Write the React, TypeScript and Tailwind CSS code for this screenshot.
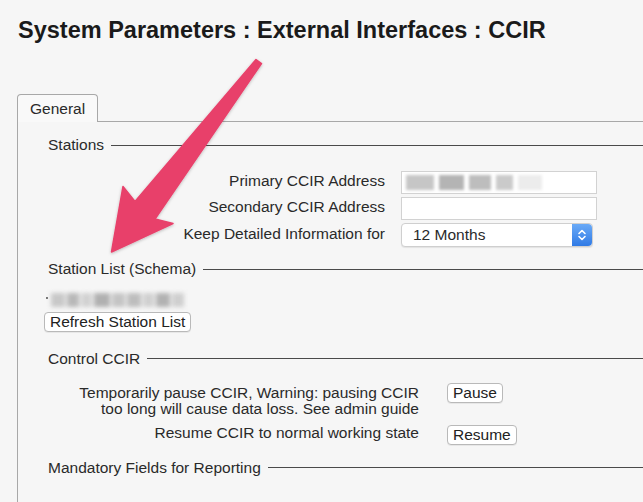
import React from 'react';

function SectionHeading({ title }: { title: string }) {
  return (
    <div className="flex h-[20px] items-center gap-[7px]">
      <span className="whitespace-nowrap">{title}</span>
      <div className="h-px flex-1 bg-[#4a4a4a]" />
    </div>
  );
}

function MacButton({ label, className = '' }: { label: string; className?: string }) {
  return (
    <button
      className={`h-[20px] whitespace-nowrap rounded-[4px] border border-[#b9b9b9] bg-white px-[5px] text-[15.5px] leading-[18px] text-[#222] shadow-[0_1px_0_rgba(0,0,0,0.06)] ${className}`}
    >
      {label}
    </button>
  );
}

function Stepper() {
  return (
    <div className="flex h-full w-[20px] items-center justify-center rounded-r-[4px] bg-gradient-to-b from-[#6aaaf7] to-[#2f7ae5]">
      <svg width="10" height="14" viewBox="0 0 10 14" fill="none">
        <path d="M2 5.5 L5 2.5 L8 5.5" stroke="white" strokeWidth="1.6" strokeLinecap="round" strokeLinejoin="round" />
        <path d="M2 8.5 L5 11.5 L8 8.5" stroke="white" strokeWidth="1.6" strokeLinecap="round" strokeLinejoin="round" />
      </svg>
    </div>
  );
}

// annotation arrow drawn over the page
function Arrow() {
  return (
    <svg className="pointer-events-none absolute inset-0" width="643" height="502" viewBox="0 0 643 502">
      <defs>
        <filter id="shadow" x="-20%" y="-20%" width="140%" height="140%">
          <feDropShadow dx="0" dy="1" stdDeviation="1.5" floodColor="#000" floodOpacity="0.25" />
        </filter>
      </defs>
      <polygon
        points="256,59.5 261.5,63.5 155,219 173,223.5 111.5,252 123,186.5 135,201.5"
        fill="#e8416b"
        stroke="#e8416b"
        strokeWidth="1.5"
        strokeLinejoin="round"
        filter="url(#shadow)"
      />
    </svg>
  );
}

export default function App() {
  return (
    <div className="relative h-[502px] w-[643px] overflow-hidden bg-[#f6f6f6] font-['Liberation_Sans',Arial,sans-serif] text-[15.5px] text-[#2a2a2a]">
      <h1 className="pl-[18px] pt-[16px] text-[23.5px] font-bold leading-[28px] text-[#1a1a1a]">
        System Parameters : External Interfaces : CCIR
      </h1>

      <div className="mt-[50px] flex items-end">
        <div className="ml-[17px] flex h-[28px] w-[81px] items-center rounded-t-[4px] border border-b-0 border-[#a8a8a8] bg-[#f9f9f9] pl-[12px] text-[15.5px]">
          General
        </div>
        <div className="flex-1 border-b border-[#a8a8a8]" />
      </div>

      <div className="ml-[17px] h-[400px] border-l border-[#a8a8a8] pl-[30px]">
        <div className="pt-[13px]">
          <SectionHeading title="Stations" />
        </div>

        <div className="mt-[16px] grid grid-cols-[337px_196px] gap-x-[16px] gap-y-[3px]">
          <div className="flex h-[23px] items-center justify-end pb-[4px]">Primary CCIR Address</div>
          <div className="relative h-[23px] overflow-hidden border border-[#d2d2d2] bg-white">
            <div className="absolute left-[4px] top-[2px] flex h-[17px] items-center gap-[5px] blur-[1.5px]">
              <div className="h-[15px] w-[28px] bg-[#c6c6c6]" />
              <div className="h-[15px] w-[25px] bg-[#b4b4b4]" />
              <div className="h-[15px] w-[22px] bg-[#bdbdbd]" />
              <div className="h-[15px] w-[17px] bg-[#cacaca]" />
              <div className="h-[15px] w-[24px] bg-[#ececec]" />
            </div>
          </div>
          <div className="flex h-[23px] items-center justify-end pb-[4px]">Secondary CCIR Address</div>
          <div className="h-[23px] border border-[#d2d2d2] bg-white" />
          <div className="flex h-[24px] items-center justify-end pb-[2px]">Keep Detailed Information for</div>
          <div className="flex h-[24px] w-[192px] items-stretch rounded-[4px] border border-[#cfcfcf] bg-white shadow-[0_1px_1px_rgba(0,0,0,0.08)]">
            <div className="flex flex-1 items-center pl-[11px]">12 Months</div>
            <Stepper />
          </div>
        </div>

        <div className="mt-[12px]">
          <SectionHeading title="Station List (Schema)" />
        </div>

        <div className="relative mt-[14px] flex h-[14px] items-center">
          <div className="absolute left-[-2px] top-[4px] h-[2px] w-[2px] bg-[#777]" />
          <div className="ml-[3px] flex h-[14px] gap-[2px] blur-[2px]">
            <div className="w-[14px] bg-[#c8c8c8]" />
            <div className="w-[12px] bg-[#b8b8b8]" />
            <div className="w-[11px] bg-[#d2d2d2]" />
            <div className="w-[16px] bg-[#b0b0b0]" />
            <div className="w-[13px] bg-[#c4c4c4]" />
            <div className="w-[14px] bg-[#bdbdbd]" />
            <div className="w-[11px] bg-[#d0d0d0]" />
            <div className="w-[14px] bg-[#b2b2b2]" />
            <div className="w-[12px] bg-[#cfcfcf]" />
          </div>
        </div>

        <MacButton label="Refresh Station List" className="ml-[-4px] mt-[5px]" />

        <div className="mt-[15px]">
          <SectionHeading title="Control CCIR" />
        </div>

        <div className="mt-[17px] grid grid-cols-[371px_auto] gap-x-[28px] gap-y-[8px] leading-[16px]">
          <div className="text-right">
            Temporarily pause CCIR, Warning: pausing CCIR
            <br />
            too long will cause data loss. See admin guide
          </div>
          <div>
            <MacButton label="Pause" className="-mt-[2px]" />
          </div>
          <div className="text-right">Resume CCIR to normal working state</div>
          <div>
            <MacButton label="Resume" />
          </div>
        </div>

        <div className="mt-[12px]">
          <SectionHeading title="Mandatory Fields for Reporting" />
        </div>
      </div>

      <Arrow />
    </div>
  );
}
